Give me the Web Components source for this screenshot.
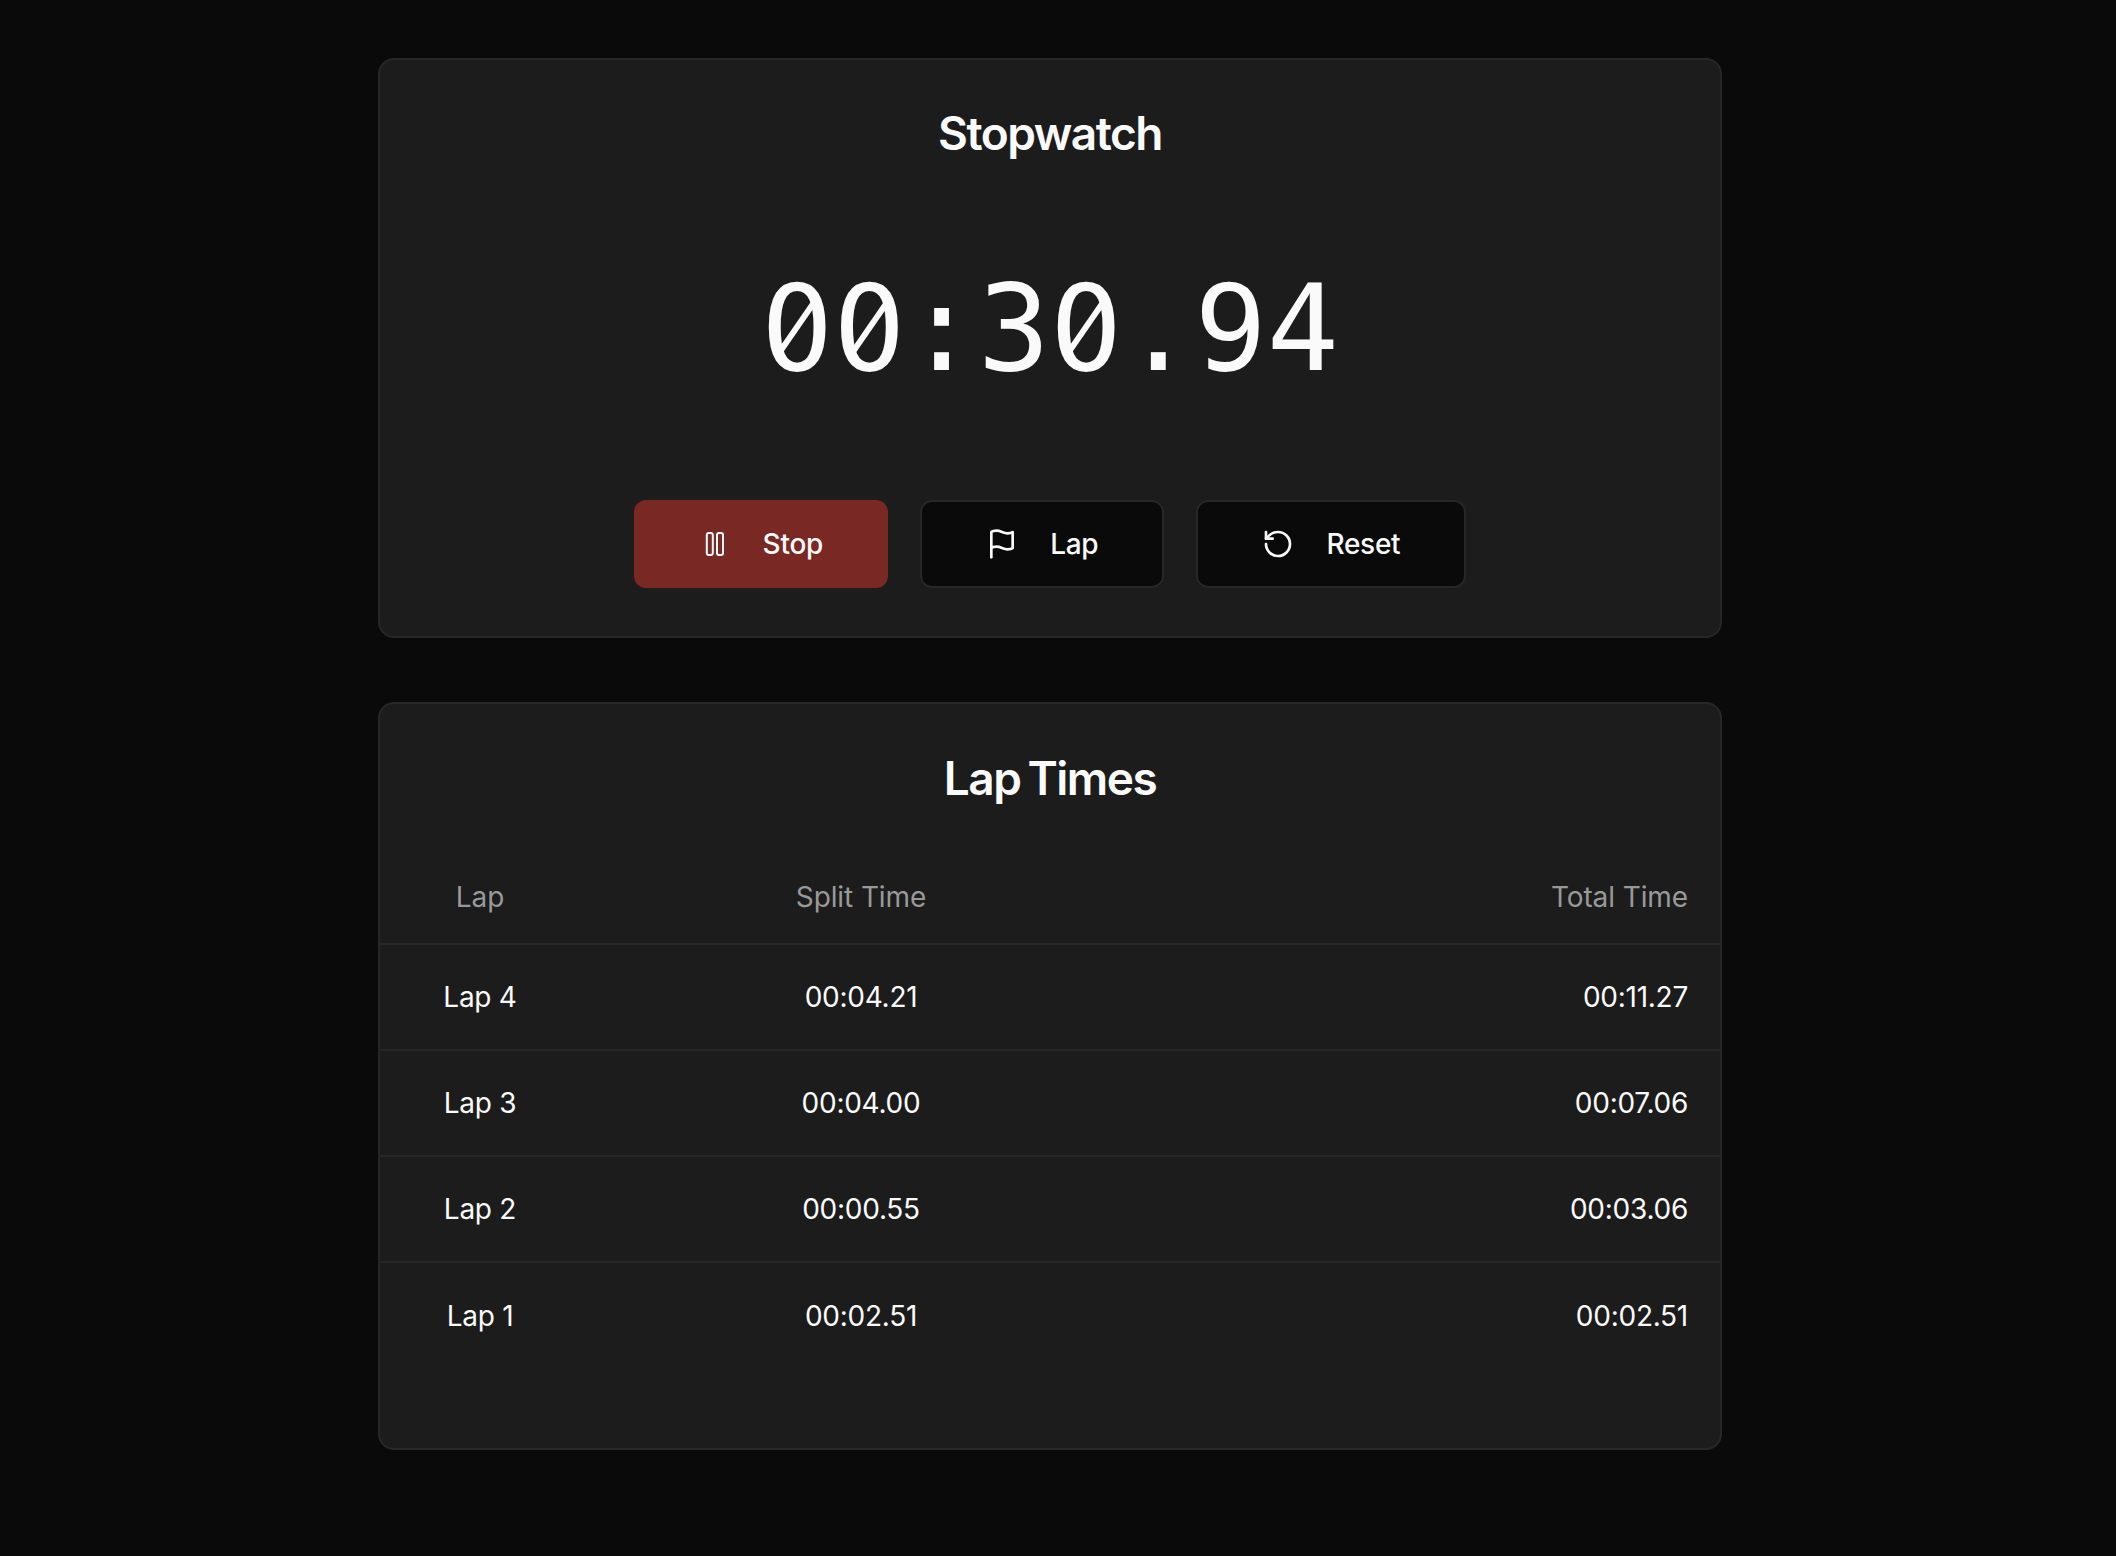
<!DOCTYPE html>
<html lang="en">
<head>
<meta charset="utf-8">
<title>Stopwatch</title>
<style>
	html, body { margin: 0; background: #0a0a0a; }
	body { color: #fafafa; font-family: Inter, "Liberation Sans", sans-serif; }
</style>
</head>
<body>

<template id="sw-page">
	<style>
		:host {
			display: flex;
			flex-direction: column;
			gap: 64px;
			box-sizing: border-box;
			min-height: 1556px;
			width: 2100px;
			padding: 58px 378px 0;
		}
	</style>
	<slot></slot>
</template>

<template id="sw-card">
	<style>
		:host {
			display: block;
			background: #1c1c1c;
			border: 2px solid #272727;
			border-radius: 16px;
		}
		h2 {
			margin: 0;
			text-align: center;
			font-size: 46px;
			font-weight: 600;
			line-height: 52px;
			letter-spacing: -1.5px;
			word-spacing: -3px;
			color: #fafafa;
		}
	</style>
	<h2><slot name="title"></slot></h2>
	<slot></slot>
</template>

<template id="sw-timer">
	<style>
		:host {
			display: block;
			margin: 84px 0 85px;
			text-align: center;
			font-family: "DejaVu Sans Mono", monospace;
			font-size: 120px;
			line-height: 172px;
			color: #fafafa;
		}
		/* The reference font has a slashed zero: hide the inner dot and lay a bar over it */
		.zero {
			position: relative;
			display: inline-block;
		}
		.zero::before, .zero::after {
			content: "";
			position: absolute;
			left: 50%;
			top: 84px;
		}
		.zero::before {
			width: 26px;
			height: 48px;
			margin: -24px 0 0 -13px;
			border-radius: 50%;
			background: #1c1c1c;
		}
		.zero::after {
			width: 5.5px;
			height: 62px;
			margin: -31px 0 0 -2.75px;
			background: #fafafa;
			transform: rotate(34.6deg);
		}
	</style>
	<span class="zero">0</span><span class="zero">0</span>:3<span class="zero">0</span>.94
</template>

<template id="sw-controls">
	<style>
		:host {
			display: flex;
			justify-content: center;
			gap: 32px;
		}
	</style>
	<slot></slot>
</template>

<template id="sw-button">
	<style>
		:host {
			display: inline-flex;
			align-items: center;
			gap: 32px;
			box-sizing: border-box;
			height: 88px;
			padding: 0 64px;
			border: 2px solid #272727;
			border-radius: 12px;
			background: #0a0a0a;
			color: #fafafa;
			font-size: 28px;
			font-weight: 450;
			letter-spacing: -0.26px;
		}
		:host(.stop) {
			padding: 0 65px;
			background: #7a2824;
			border: 0;
		}
		::slotted(svg) {
			width: 32px;
			height: 32px;
			flex: none;
		}
	</style>
	<slot name="icon"></slot>
	<slot></slot>
</template>

<template id="lap-row">
	<style>
		:host {
			display: grid;
			grid-template-columns: 200px 562px 1fr;
			align-items: center;
			height: 106px;
			padding-right: 32px;
			font-size: 28px;
			letter-spacing: -0.26px;
			color: #fafafa;
		}
		:host(.head) {
			height: 94px;
			color: #999;
			letter-spacing: -0.1px;
		}
		:host(.line) { border-bottom: 2px solid #272727; box-sizing: border-box; }
		div { text-align: center; }
		div:last-child { text-align: right; }
	</style>
	<div><slot name="lap"></slot></div>
	<div><slot name="split"></slot></div>
	<div><slot name="total"></slot></div>
</template>

<sw-page>
	<sw-card style="padding: 47px 0 48px">
		<span slot="title">Stopwatch</span>
		<sw-timer></sw-timer>
		<sw-controls>
			<sw-button class="stop">
				<svg slot="icon" viewBox="0 0 32 32" fill="none" stroke="#fafafa" stroke-width="2"><rect x="7.8" y="5" width="6" height="22" rx="2"/><rect x="18" y="5" width="6" height="22" rx="2"/></svg>
				Stop
			</sw-button>
			<sw-button>
				<svg slot="icon" viewBox="0 0 24 24" fill="none" stroke="#fafafa" stroke-width="2" stroke-linecap="round" stroke-linejoin="round"><path d="M4 15s1-1 4-1 5 2 8 2 4-1 4-1V3s-1 1-4 1-5-2-8-2-4 1-4 1z"/><path d="M4 22v-7"/></svg>
				Lap
			</sw-button>
			<sw-button>
				<svg slot="icon" viewBox="0 0 24 24" fill="none" stroke="#fafafa" stroke-width="2" stroke-linecap="round" stroke-linejoin="round"><path d="M3 12a9 9 0 1 0 9-9 9.75 9.75 0 0 0-6.74 2.74L3 8"/><path d="M3 3v5h5"/></svg>
				Reset
			</sw-button>
		</sw-controls>
	</sw-card>

	<sw-card style="padding: 48px 0 79px">
		<span slot="title">Lap Times</span>
		<lap-row class="head line" style="margin-top: 47px"><span slot="lap">Lap</span><span slot="split">Split Time</span><span slot="total">Total Time</span></lap-row>
		<lap-row class="line"><span slot="lap">Lap 4</span><span slot="split">00:04.21</span><span slot="total">00:11.27</span></lap-row>
		<lap-row class="line"><span slot="lap">Lap 3</span><span slot="split">00:04.00</span><span slot="total">00:07.06</span></lap-row>
		<lap-row class="line"><span slot="lap">Lap 2</span><span slot="split">00:00.55</span><span slot="total">00:03.06</span></lap-row>
		<lap-row><span slot="lap">Lap 1</span><span slot="split">00:02.51</span><span slot="total">00:02.51</span></lap-row>
	</sw-card>
</sw-page>

<script>
	/* Every element just stamps its template into an open shadow root */
	['sw-page', 'sw-card', 'sw-timer', 'sw-controls', 'sw-button', 'lap-row'].forEach(name => {
		customElements.define(name, class extends HTMLElement {
			constructor() {
				super();
				var root = this.attachShadow({mode: 'open'});
				root.appendChild(document.getElementById(name).content.cloneNode(true));
			}
		});
	});
</script>
</body>
</html>
